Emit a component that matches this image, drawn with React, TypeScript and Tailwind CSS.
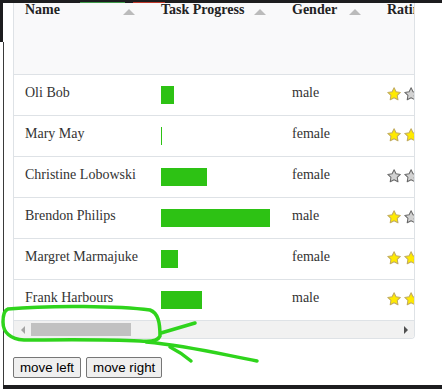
import React from "react";

const ROWS = [
  { name: "Oli Bob", progress: 12, gender: "male", rating: 1 },
  { name: "Mary May", progress: 1, gender: "female", rating: 2 },
  { name: "Christine Lobowski", progress: 42, gender: "female", rating: 0 },
  { name: "Brendon Philips", progress: 100, gender: "male", rating: 1 },
  { name: "Margret Marmajuke", progress: 16, gender: "female", rating: 2 },
  { name: "Frank Harbours", progress: 38, gender: "male", rating: 4 },
];

// width of the progress cell's inner area
const BAR_MAX = 109;

function Star({ on }: { on: boolean }) {
  return (
    <svg width="14" height="14" viewBox="0 0 512 512" className="shrink-0">
      <polygon
        fill={on ? "#FFEA00" : "#D2D2D2"}
        stroke={on ? "#C1AB60" : "#686868"}
        strokeWidth="37.6"
        strokeLinejoin="round"
        points="259.2,29.9 330.3,173.9 489.2,197 374.2,309.1 401.3,467.3 259.2,392.6 117.1,467.3 144.3,309.1 29.3,197 188.2,173.9"
      />
    </svg>
  );
}

function SortArrow() {
  return (
    <span className="absolute right-[14px] top-[6px] h-0 w-0 border-x-[6px] border-b-[6px] border-x-transparent border-b-[#bbbbbb]" />
  );
}

export default function App() {
  return (
    <div className="relative flex h-[389px] w-[442px] flex-col overflow-hidden bg-white font-['Liberation_Serif',serif]">
      {/* screen frame top */}
      <div className="flex h-[3px] shrink-0 items-end bg-[#1d1d1f]">
        <span className="ml-[80px] h-[1px] w-[45px] bg-[#3f9a4a]" />
        <span className="ml-[8px] h-[1px] w-[32px] bg-[#c0392b]" />
      </div>

      <div className="flex flex-1">
        <div className="flex w-[4px] shrink-0 flex-col">
          <div className="h-[39px] w-[3px] bg-[#1d1d1f]" />
          <div className="flex-1 border-r border-[#3a3a3a]" />
        </div>

        <div className="flex flex-col pl-[9px]">
          {/* table */}
          <div className="w-[402px] overflow-hidden rounded-b-[4px] border-x border-b border-[#dee2e6]">
            <div className="w-[600px]">
              <div className="flex h-[72px] border-b border-[#dee2e6] bg-[#f9f9fa] text-[14px] font-bold text-[#222]">
                <div className="relative w-[135px] pl-[11px]">
                  <div className="-mt-[2px] leading-[17px]">Name</div>
                  <SortArrow />
                </div>
                <div className="relative w-[131px] pl-[12px]">
                  <div className="-mt-[2px] leading-[17px]">Task Progress</div>
                  <SortArrow />
                </div>
                <div className="relative w-[95px] pl-[12px]">
                  <div className="-mt-[2px] leading-[17px]">Gender</div>
                  <SortArrow />
                </div>
                <div className="relative w-[120px] pl-[12px]">
                  <div className="-mt-[2px] leading-[17px]">Rating</div>
                </div>
              </div>

              {ROWS.map((r) => (
                <div
                  key={r.name}
                  className="flex h-[41px] items-center border-b border-[#dee2e6] text-[14px] text-[#333]"
                >
                  <div className="w-[135px] pb-[5px] pl-[11px]">{r.name}</div>
                  <div className="w-[131px] pl-[12px] pr-[10px]">
                    <div
                      className="h-[18px] bg-[#2dc214]"
                      style={{ width: Math.max(1, Math.round((BAR_MAX * r.progress) / 100)) }}
                    />
                  </div>
                  <div className="w-[95px] pb-[5px] pl-[12px]">{r.gender}</div>
                  <div className="flex w-[120px] gap-[3px] pb-[2px] pl-[12px]">
                    {[1, 2, 3, 4, 5].map((i) => (
                      <Star key={i} on={i <= r.rating} />
                    ))}
                  </div>
                </div>
              ))}
            </div>

            {/* horizontal scrollbar */}
            <div className="flex h-[17px] items-center bg-[#f1f1f1]">
              <div className="flex w-[17px] justify-center">
                <span className="h-0 w-0 border-y-[4px] border-r-[4px] border-y-transparent border-r-[#a3a3a3]" />
              </div>
              <div className="h-[13px] w-[100px] bg-[#c1c1c1]" />
              <div className="flex-1" />
              <div className="flex w-[17px] justify-center">
                <span className="h-0 w-0 border-y-[4px] border-l-[4px] border-y-transparent border-l-[#505050]" />
              </div>
            </div>
          </div>

          <div className="mt-[18px] flex gap-[5px] font-['Liberation_Sans',Arial,sans-serif] text-[13.33px] text-black">
            <button className="h-[21px] rounded-[2px] border border-[#767676] bg-[#efefef] px-[6px] leading-none">
              move left
            </button>
            <button className="h-[21px] rounded-[2px] border border-[#767676] bg-[#efefef] px-[6px] leading-none">
              move right
            </button>
          </div>
        </div>
      </div>

      {/* screen frame bottom */}
      <div className="ml-[3px] h-[4px] shrink-0 bg-[#1d1d1f]" />

      {/* hand-drawn annotation */}
      <svg
        className="pointer-events-none absolute left-0 top-0"
        width="442"
        height="389"
        viewBox="0 0 442 389"
        fill="none"
        stroke="#2fd41c"
        strokeWidth="3.5"
        strokeLinecap="round"
        strokeLinejoin="round"
      >
        <path d="M8 309 C 50 305, 120 306, 150 310 C 158 313, 160 322, 160 336 C 158 341, 150 342, 140 341 C 100 339, 50 340, 24 340 C 10 339, 3 332, 3 322 C 3 314, 5 310, 8 309" />
        <path d="M161 333 L 195 323" />
        <path d="M146 342 C 190 346, 220 354, 257 361" />
        <path d="M170 347 C 178 351, 185 356, 191 361" />
      </svg>
    </div>
  );
}
